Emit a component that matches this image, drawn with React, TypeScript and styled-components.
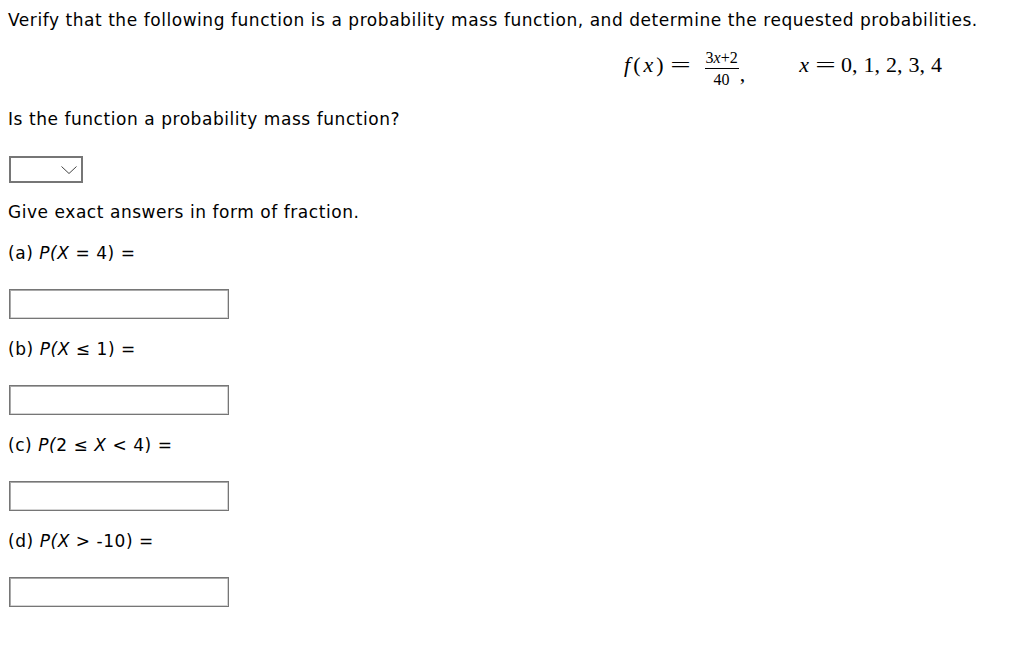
import React from "react";
import styled, { createGlobalStyle } from "styled-components";

const Global = createGlobalStyle`
  html, body { margin: 0; padding: 0; background: #fff; }
  body { font-family: "DejaVu Sans", Verdana, sans-serif; color: #000; }
`;

const Page = styled.div`
  padding: 9px 8px 8px;
  font-family: "DejaVu Sans", Verdana, sans-serif;
  font-size: 17px;
  letter-spacing: 0.55px;
  line-height: 22px;
`;

const Text = styled.p<{ $top?: number }>`
  margin: ${(p) => p.$top ?? 0}px 0 0 0;
  height: 22px;
  white-space: nowrap;
`;

const FormulaRow = styled.div`
  margin-top: 16px;
  height: 40px;
  padding-left: 616px;
  display: flex;
  align-items: flex-start;
  font-family: "Liberation Serif", "Times New Roman", serif;
  font-size: 22px;
  line-height: 22px;
  letter-spacing: 0;
  white-space: nowrap;
`;

const I = styled.i`
  font-style: italic;
`;

const Lhs = styled.span`
  margin-top: 7px;
  letter-spacing: 3px;
`;

const Rhs = styled.span<{ $gap?: number }>`
  margin-top: 7px;
  margin-left: ${(p) => p.$gap ?? 0}px;
  display: inline-flex;
`;

const Values = styled.span`
  word-spacing: 0.5px;
`;

const Op = styled.span<{ $left: number; $right: number; $top?: number }>`
  display: inline-block;
  width: 19px;
  margin-top: ${(p) => p.$top ?? 0}px;
  margin-left: ${(p) => p.$left}px;
  margin-right: ${(p) => p.$right}px;
  text-align: center;
  transform: scaleX(1.65);
`;

const Frac = styled.span`
  display: inline-flex;
  flex-direction: column;
  align-items: center;
  margin-top: 4px;
  font-size: 16px;
  line-height: 14px;
`;

const Num = styled.span`
  padding: 0 1px 3px;
  border-bottom: 1px solid #000;
`;

const Den = styled.span`
  padding-top: 4px;
`;

const Comma = styled.span`
  margin-top: 16px;
  margin-left: 1px;
`;

const Select = styled.div`
  margin-top: 26px;
  margin-left: 1px;
  width: 74px;
  height: 27px;
  box-sizing: border-box;
  border: 2px solid #767676;
  display: flex;
  align-items: center;
  justify-content: flex-end;
  padding-right: 4px;
  background: #fff;
`;

const Input = styled.div`
  margin-top: 25px;
  margin-left: 1px;
  width: 220px;
  height: 30px;
  box-sizing: border-box;
  border: 1px solid #767676;
  box-shadow: inset 1px 1px 0 #a9a9a9, inset -1px -1px 0 #d4d4d4;
  background: #fff;
`;

const Label = styled.p`
  margin: 19px 0 0 0;
  height: 22px;
  white-space: nowrap;
`;

const Part = styled.div``;

const parts: { key: string; label: React.ReactNode }[] = [
  { key: "a", label: <>(a) <I>P(X</I> = 4) =</> },
  { key: "b", label: <>(b) <I>P(X</I> ≤ 1) =</> },
  { key: "c", label: <>(c) <I>P(</I>2 ≤ <I>X</I> &lt; 4) =</> },
  { key: "d", label: <>(d) <I>P(X</I> &gt; -10) =</> },
];

export default function App() {
  return (
    <Page>
      <Global />
      <Text>
        Verify that the following function is a probability mass function, and determine the requested probabilities.
      </Text>
      <FormulaRow>
        <Lhs>
          <I>f</I>(<I>x</I>)
        </Lhs>
        <Op $left={4} $right={15} $top={7}>=</Op>
        <Frac>
          <Num>
            3<I>x</I>+2
          </Num>
          <Den>40</Den>
        </Frac>
        <Comma>,</Comma>
        <Rhs $gap={54}>
          <I>x</I>
          <Op $left={7} $right={6}>=</Op>
          <Values>0, 1, 2, 3, 4</Values>
        </Rhs>
      </FormulaRow>
      <Text $top={21}>Is the function a probability mass function?</Text>
      <Select>
        <svg width="16" height="8" viewBox="0 0 16 8">
          <polyline points="0.5,0.5 8,7.5 15.5,0.5" fill="none" stroke="#444" strokeWidth="1" />
        </svg>
      </Select>
      <Text $top={18}>Give exact answers in form of fraction.</Text>
      {parts.map((p) => (
        <Part key={p.key}>
          <Label>{p.label}</Label>
          <Input />
        </Part>
      ))}
    </Page>
  );
}
